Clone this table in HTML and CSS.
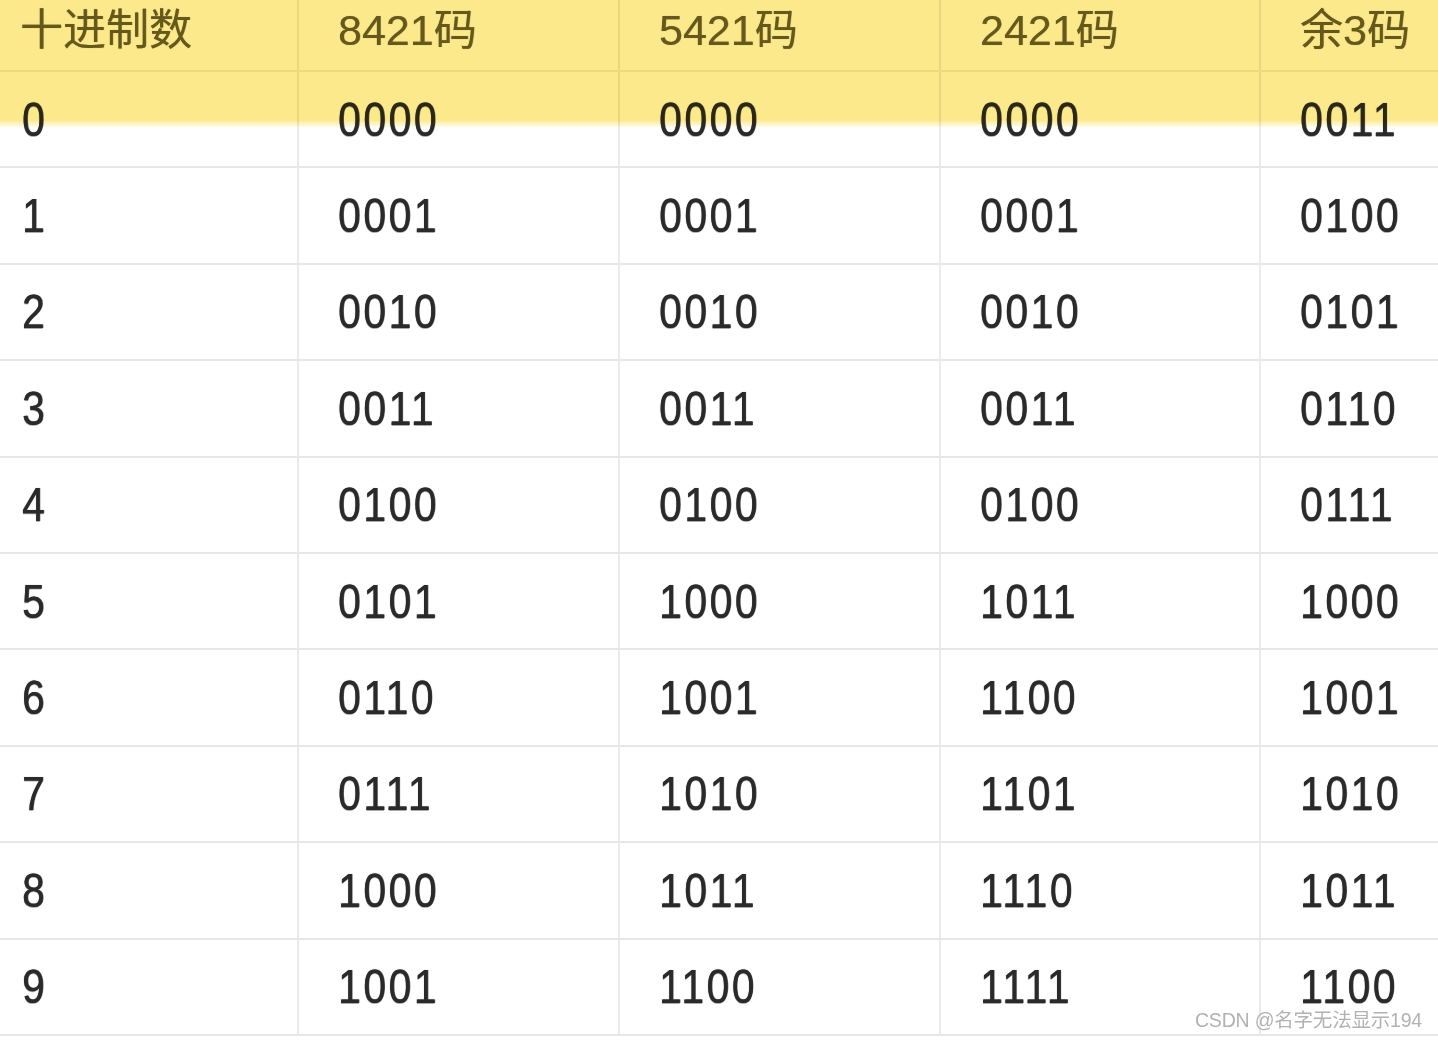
FILE: index.html
```html
<!DOCTYPE html>
<html lang="zh-CN">
<head>
<meta charset="utf-8">
<title>BCD码对照表</title>
<link rel="stylesheet" href="styles.css">
</head>
<body>
<div class="sheet">
  <div class="table">
    <div class="row head">
      <div class="cell">十进制数</div>
      <div class="cell">8421码</div>
      <div class="cell">5421码</div>
      <div class="cell">2421码</div>
      <div class="cell">余3码</div>
    </div>
    <div class="row"><div class="cell"><span class="num">0</span></div><div class="cell"><span class="num">0000</span></div><div class="cell"><span class="num">0000</span></div><div class="cell"><span class="num">0000</span></div><div class="cell"><span class="num">0011</span></div></div>
    <div class="row"><div class="cell"><span class="num">1</span></div><div class="cell"><span class="num">0001</span></div><div class="cell"><span class="num">0001</span></div><div class="cell"><span class="num">0001</span></div><div class="cell"><span class="num">0100</span></div></div>
    <div class="row"><div class="cell"><span class="num">2</span></div><div class="cell"><span class="num">0010</span></div><div class="cell"><span class="num">0010</span></div><div class="cell"><span class="num">0010</span></div><div class="cell"><span class="num">0101</span></div></div>
    <div class="row"><div class="cell"><span class="num">3</span></div><div class="cell"><span class="num">0011</span></div><div class="cell"><span class="num">0011</span></div><div class="cell"><span class="num">0011</span></div><div class="cell"><span class="num">0110</span></div></div>
    <div class="row"><div class="cell"><span class="num">4</span></div><div class="cell"><span class="num">0100</span></div><div class="cell"><span class="num">0100</span></div><div class="cell"><span class="num">0100</span></div><div class="cell"><span class="num">0111</span></div></div>
    <div class="row"><div class="cell"><span class="num">5</span></div><div class="cell"><span class="num">0101</span></div><div class="cell"><span class="num">1000</span></div><div class="cell"><span class="num">1011</span></div><div class="cell"><span class="num">1000</span></div></div>
    <div class="row"><div class="cell"><span class="num">6</span></div><div class="cell"><span class="num">0110</span></div><div class="cell"><span class="num">1001</span></div><div class="cell"><span class="num">1100</span></div><div class="cell"><span class="num">1001</span></div></div>
    <div class="row"><div class="cell"><span class="num">7</span></div><div class="cell"><span class="num">0111</span></div><div class="cell"><span class="num">1010</span></div><div class="cell"><span class="num">1101</span></div><div class="cell"><span class="num">1010</span></div></div>
    <div class="row"><div class="cell"><span class="num">8</span></div><div class="cell"><span class="num">1000</span></div><div class="cell"><span class="num">1011</span></div><div class="cell"><span class="num">1110</span></div><div class="cell"><span class="num">1011</span></div></div>
    <div class="row"><div class="cell"><span class="num">9</span></div><div class="cell"><span class="num">1001</span></div><div class="cell"><span class="num">1100</span></div><div class="cell"><span class="num">1111</span></div><div class="cell"><span class="num">1100</span></div></div>
  </div>
  <div class="highlight"></div>
  <div class="watermark">CSDN @名字无法显示194</div>
</div>
</body>
</html>
```
FILE: styles.css
```css
html, body {
  margin: 0;
  padding: 0;
  background: #ffffff;
}

body {
  width: 1438px;
  height: 1040px;
  overflow: hidden;
}

.sheet {
  position: relative;
  width: 1438px;
  height: 1040px;
  overflow: hidden;
  background: #ffffff;
}

.table {
  margin-top: -24px;
  display: flex;
  flex-direction: column;
}

.row {
  display: grid;
  grid-template-columns: 299px 321px 321px 320px 1fr;
  height: 96.4px;
  box-sizing: border-box;
  border-bottom: 2px solid #e7e7e7;
  font-family: "Liberation Sans", Arial, "Noto Sans CJK SC", sans-serif;
  font-size: 48px;
  color: #2a2a2a;
}

.row.head {
  height: 96px;
  border-bottom: 2px solid #eeeeee;
  font-family: "Liberation Sans", "Noto Sans CJK SC", sans-serif;
  font-size: 43px;
  color: #666030;
  text-shadow: 0 0 1px rgba(90, 80, 20, 0.4), 0.5px 0 0 rgba(90, 80, 20, 0.35);
}

.cell {
  display: flex;
  align-items: center;
  padding-left: 39px;
  border-right: 2px solid #ebebeb;
  white-space: nowrap;
}

.cell:first-child {
  padding-left: 22px;
}

.cell:last-child {
  border-right: none;
}

.head .cell {
  padding-top: 6px;
}

.head .cell:first-child {
  padding-left: 20px;
}

.num {
  display: inline-block;
  letter-spacing: 3px;
  transform: scaleX(0.85);
  transform-origin: left center;
  text-shadow: 0 0 1px rgba(0, 0, 0, 0.5), 0.8px 0 0 rgba(0, 0, 0, 0.55), 0 0.5px 0 rgba(0, 0, 0, 0.3);
}

.highlight {
  position: absolute;
  left: 0;
  top: 0;
  width: 100%;
  height: 128px;
  background: linear-gradient(to bottom, #fce98c 0, #fce98c 120px, rgba(252, 233, 140, 0) 128px);
  mix-blend-mode: multiply;
  pointer-events: none;
}

.watermark {
  position: absolute;
  right: 16px;
  bottom: 7px;
  font-family: "Liberation Sans", "Noto Sans CJK SC", sans-serif;
  font-size: 19.5px;
  color: #b2b2b2;
  letter-spacing: -0.2px;
}
```
